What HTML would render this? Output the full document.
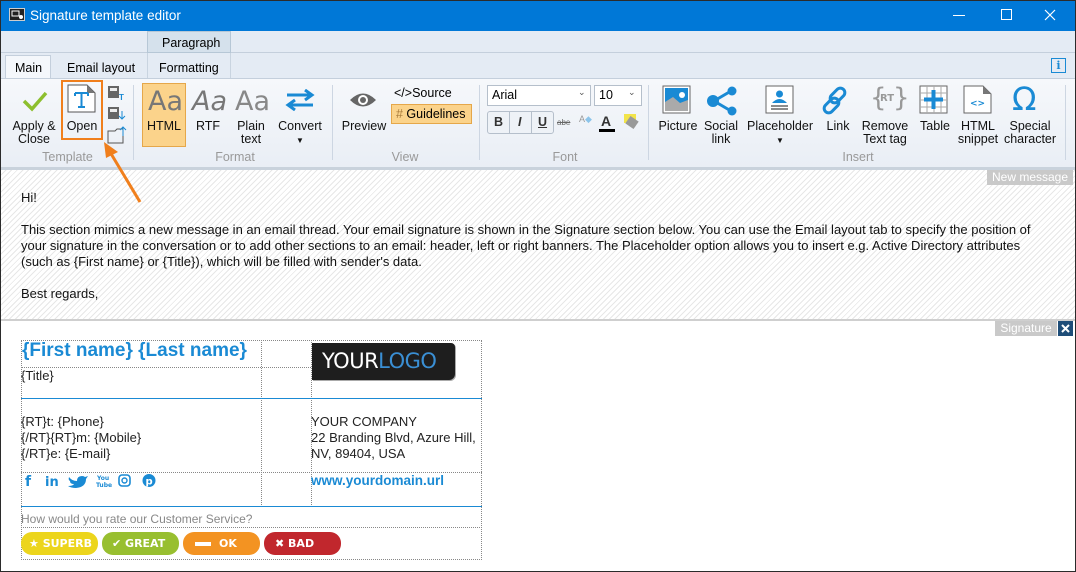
<!DOCTYPE html>
<html><head><style>
*{box-sizing:border-box;margin:0;padding:0}
body{width:1076px;height:572px;overflow:hidden;font-family:"Liberation Sans",Arial,sans-serif;background:#fff;position:relative}
.a{position:absolute}
.win{position:absolute;left:0;top:0;width:1076px;height:572px;border:1px solid #2b2b2b}
.tb{left:0;top:0;width:1076px;height:31px;background:#0078d7;color:#fff;font-size:13px}
.ui{font-family:"Liberation Sans",Arial,sans-serif;font-size:12.5px;color:#000}
.lbl{font-family:"Liberation Sans",Arial,sans-serif;font-size:12.5px;text-align:center;line-height:13px;color:#111}
.grp{font-size:12.5px;color:#999;text-align:center}
.sep{width:1px;background:#cdd6e2;top:85px;height:75px}
.sig{font-family:"Liberation Sans",Arial,sans-serif;font-size:13px;color:#222}
.dv{border-left:1px dotted #888}
.dh{border-top:1px dotted #888}
.btn{height:23px;border-radius:11px;color:#fff;font-weight:bold;font-size:11px;line-height:23px;font-family:"DejaVu Sans",sans-serif}
</style></head><body>
<div class="a tb"></div>
<svg class="a" style="left:9px;top:8px" width="16" height="14"><rect x="0.5" y="0.5" width="15" height="12" fill="#222" stroke="#ccc"/><rect x="3" y="3" width="7" height="5" fill="none" stroke="#fff"/><circle cx="12" cy="9" r="2" fill="#fff"/></svg>
<div class="a ui" style="left:30px;top:8px;color:#fff;font-size:13.5px">Signature template editor</div>
<div class="a" style="left:953px;top:15px;width:12px;height:1px;background:#fff"></div>
<div class="a" style="left:1001px;top:9px;width:11px;height:11px;border:1px solid #fff"></div>
<svg class="a" style="left:1044px;top:9px" width="12" height="12"><path d="M1 1 L11 11 M11 1 L1 11" stroke="#fff" stroke-width="1.2"/></svg>
<!-- tab area -->
<div class="a" style="left:1px;top:31px;width:1074px;height:47px;background:#e4ebf4"></div>
<div class="a" style="left:1px;top:52px;width:1074px;height:1px;background:#c4cfdc"></div>
<div class="a" style="left:147px;top:31px;width:84px;height:22px;background:#d5e1ec;border:1px solid #b6c7d6"></div>
<div class="a ui" style="left:162px;top:36px">Paragraph</div>
<div class="a" style="left:147px;top:53px;width:84px;height:25px;border-left:1px solid #c9d4e0;border-right:1px solid #c9d4e0"></div>
<div class="a" style="left:5px;top:55px;width:46px;height:24px;background:#f4f7fb;border:1px solid #c4cfdc;border-bottom:none"></div>
<div class="a ui" style="left:15px;top:61px">Main</div>
<div class="a ui" style="left:67px;top:61px">Email layout</div>
<div class="a ui" style="left:159px;top:61px">Formatting</div>
<div class="a" style="left:1051px;top:58px;width:15px;height:15px;border:1px solid #1a8ad4;color:#1a8ad4;font:bold 11px 'DejaVu Serif',serif;text-align:center;line-height:13px">i</div>
<!-- ribbon -->
<div class="a" style="left:1px;top:78px;width:1074px;height:90px;background:linear-gradient(#f6f8fb,#e9eef5);border-top:1px solid #c4cfdc"></div>
<div class="a" style="left:1px;top:167px;width:1074px;height:3px;background:#c9d2dc"></div>
<!-- Template group -->
<svg class="a" style="left:22px;top:90px" width="26" height="22"><path d="M2 11 L10 19 L24 3" stroke="#8dbf2e" stroke-width="3.5" fill="none"/></svg>
<div class="a lbl" style="left:8px;top:120px;width:52px">Apply &amp;<br>Close</div>
<div class="a" style="left:61px;top:80px;width:42px;height:60px;border:2px solid #f07f1c"></div>
<svg class="a" style="left:67px;top:84px" width="30" height="30"><path d="M1 1 H20 L28 9 V28 H1 Z" fill="#fff" stroke="#555"/><path d="M20 1 V9 H28" fill="#777"/><path d="M8 9 H21 M14.5 9 V23 M11 23 H18 M8 9 V12 M21 9 V12" stroke="#1a8ad4" stroke-width="2" fill="none"/></svg>
<div class="a lbl" style="left:64px;top:120px;width:36px">Open</div>
<svg class="a" style="left:107px;top:85px" width="20" height="60"><rect x="1" y="1" width="11" height="12" fill="#666"/><rect x="3" y="3" width="7" height="3" fill="#eee"/><text x="12" y="15" font-size="8" fill="#1a8ad4" font-family="Liberation Sans" font-weight="bold">T</text><rect x="1" y="22" width="11" height="12" fill="#666"/><rect x="3" y="24" width="7" height="3" fill="#eee"/><path d="M15 26 V34 M12 31 L15 34 L18 31" stroke="#1a8ad4" fill="none"/><path d="M1 46 H8 L10 44 H16 V58 H1 Z" fill="none" stroke="#555"/><path d="M16 51 V42 M13 45 L16 42 L19 45" stroke="#1a8ad4" fill="none"/></svg>
<div class="a grp" style="left:30px;top:150px;width:75px">Template</div>
<div class="a sep" style="left:133px"></div>
<!-- Format -->
<div class="a" style="left:142px;top:83px;width:44px;height:64px;background:#fbd38b;border:1px solid #e5a74a"></div>
<div class="a" style="left:148px;top:86px;font-size:27px;color:#777;font-family:'DejaVu Sans',sans-serif">Aa</div>
<div class="a lbl" style="left:142px;top:120px;width:44px">HTML</div>
<div class="a" style="left:192px;top:86px;font-size:27px;color:#777;font-style:italic;font-family:'DejaVu Sans',sans-serif">Aa</div>
<div class="a lbl" style="left:188px;top:120px;width:40px">RTF</div>
<div class="a" style="left:235px;top:86px;font-size:27px;color:#888;font-family:'DejaVu Sans',sans-serif">Aa</div>
<div class="a lbl" style="left:231px;top:120px;width:40px">Plain<br>text</div>
<svg class="a" style="left:285px;top:89px" width="30" height="22"><path d="M2 6 H26 M20 1 L27 6 L20 11" stroke="#1a8ad4" stroke-width="3" fill="none"/><path d="M28 16 H4 M10 11 L3 16 L10 21" stroke="#1a8ad4" stroke-width="3" fill="none"/></svg>
<div class="a lbl" style="left:274px;top:120px;width:52px">Convert<br><span style="font-size:8px">▼</span></div>
<div class="a grp" style="left:200px;top:150px;width:70px">Format</div>
<div class="a sep" style="left:332px"></div>
<!-- View -->
<svg class="a" style="left:349px;top:91px" width="28" height="18"><path d="M1 9 Q14 -4 27 9 Q14 22 1 9 Z" fill="#666"/><circle cx="14" cy="9" r="5" fill="#fff"/><circle cx="14" cy="9" r="3" fill="#666"/></svg>
<div class="a lbl" style="left:340px;top:120px;width:48px">Preview</div>
<div class="a ui" style="left:394px;top:86px">&lt;/&gt;Source</div>
<div class="a" style="left:391px;top:104px;width:81px;height:20px;background:#fbd38b;border:1px solid #e5a74a"></div>
<div class="a ui" style="left:396px;top:107px"><span style="color:#a87a3a">#</span> Guidelines</div>
<div class="a grp" style="left:380px;top:150px;width:50px">View</div>
<div class="a sep" style="left:479px"></div>
<!-- Font -->
<div class="a" style="left:487px;top:85px;width:104px;height:21px;background:#fff;border:1px solid #b5bfcb"></div>
<div class="a ui" style="left:492px;top:88px">Arial</div>
<div class="a ui" style="left:578px;top:87px;font-size:9px;color:#555">⌄</div>
<div class="a" style="left:594px;top:85px;width:48px;height:21px;background:#fff;border:1px solid #b5bfcb"></div>
<div class="a ui" style="left:599px;top:88px">10</div>
<div class="a ui" style="left:628px;top:87px;font-size:9px;color:#555">⌄</div>
<div class="a" style="left:487px;top:111px;width:67px;height:23px;border:1px solid #b5bfcb;border-radius:3px;background:#eef2f7"></div>
<div class="a" style="left:509px;top:111px;width:1px;height:23px;background:#b5bfcb"></div>
<div class="a" style="left:531px;top:111px;width:1px;height:23px;background:#b5bfcb"></div>
<div class="a ui" style="left:494px;top:115px;font-weight:bold;color:#333">B</div>
<div class="a ui" style="left:518px;top:115px;font-weight:bold;font-style:italic;color:#333">I</div>
<div class="a ui" style="left:538px;top:115px;font-weight:bold;text-decoration:underline;color:#333">U</div>
<div class="a ui" style="left:557px;top:118px;font-size:8px;color:#666;text-decoration:line-through">abe</div>
<div class="a ui" style="left:579px;top:114px;font-size:9px;color:#999">A<span style="color:#8cc4ea">◆</span></div>
<div class="a ui" style="left:601px;top:113px;font-weight:bold;font-size:14px;color:#333">A</div>
<div class="a" style="left:599px;top:129px;width:16px;height:3px;background:#000"></div>
<div class="a" style="left:624px;top:114px;width:12px;height:9px;background:#f2e44a"></div>
<div class="a" style="left:627px;top:118px;width:10px;height:9px;background:#999;transform:rotate(35deg)"></div>
<div class="a grp" style="left:540px;top:150px;width:50px">Font</div>
<div class="a sep" style="left:648px"></div>
<!-- Insert -->
<svg class="a" style="left:662px;top:85px" width="30" height="30"><rect x="1" y="1" width="27" height="27" fill="#fff" stroke="#666"/><rect x="3" y="3" width="23" height="23" fill="#1a8ad4"/><path d="M3 26 V17 L11 12 L18 18 L26 15 V26 Z" fill="#aaa"/><circle cx="20" cy="10" r="3" fill="#fff"/></svg>
<div class="a lbl" style="left:656px;top:120px;width:44px">Picture</div>
<svg class="a" style="left:706px;top:86px" width="32" height="30"><path d="M8 15 L25 5 M8 15 L25 25" stroke="#1a8ad4" stroke-width="3"/><circle cx="7" cy="15" r="6" fill="#1a8ad4"/><circle cx="26" cy="5" r="4.5" fill="#1a8ad4"/><circle cx="26" cy="25" r="4.5" fill="#1a8ad4"/></svg>
<div class="a lbl" style="left:700px;top:120px;width:42px">Social<br>link</div>
<svg class="a" style="left:765px;top:85px" width="30" height="30"><rect x="1" y="1" width="27" height="27" fill="#fff" stroke="#666"/><circle cx="14.5" cy="9" r="3.5" fill="#1a8ad4"/><path d="M7 18 Q14.5 10 22 18 Z" fill="#1a8ad4"/><path d="M6 21 H23 M6 24 H23" stroke="#666" stroke-width="1.5"/></svg>
<div class="a lbl" style="left:744px;top:120px;width:72px">Placeholder<br><span style="font-size:8px">▼</span></div>
<svg class="a" style="left:821px;top:86px" width="32" height="30"><g fill="none" stroke="#1a8ad4" stroke-width="3"><rect x="12" y="1" width="9" height="17" rx="4.5" transform="rotate(45 16.5 9.5)"/><rect x="6" y="11" width="9" height="17" rx="4.5" transform="rotate(45 10.5 19.5)"/></g></svg>
<div class="a lbl" style="left:820px;top:120px;width:36px">Link</div>
<div class="a" style="left:870px;top:83px;font-family:'DejaVu Sans',sans-serif;font-size:26px;color:#999">{</div>
<div class="a" style="left:880px;top:93px;font-family:'DejaVu Sans',sans-serif;font-size:10px;color:#999;font-weight:bold">RT</div>
<div class="a" style="left:893px;top:83px;font-family:'DejaVu Sans',sans-serif;font-size:26px;color:#999">}</div>
<div class="a lbl" style="left:860px;top:120px;width:50px">Remove<br>Text tag</div>
<svg class="a" style="left:919px;top:85px" width="30" height="30"><rect x="1" y="1" width="27" height="27" fill="#fff" stroke="#666"/><path d="M1 8 H28 M1 15 H28 M1 22 H28 M8 1 V28 M15 1 V28 M22 1 V28" stroke="#aaa"/><path d="M14.5 5 V24 M5 14.5 H24" stroke="#1a8ad4" stroke-width="4"/></svg>
<div class="a lbl" style="left:916px;top:120px;width:38px">Table</div>
<svg class="a" style="left:963px;top:85px" width="30" height="30"><path d="M1 1 H20 L28 9 V28 H1 Z" fill="#fff" stroke="#666"/><path d="M20 1 V9 H28 Z" fill="#777"/><text x="7" y="21" font-size="9" fill="#1a8ad4" font-family="DejaVu Sans" font-weight="bold">&lt;&gt;</text></svg>
<div class="a lbl" style="left:956px;top:120px;width:44px">HTML<br>snippet</div>
<div class="a" style="left:1012px;top:80px;font-family:'DejaVu Sans',sans-serif;font-size:32px;color:#1a8ad4">Ω</div>
<div class="a lbl" style="left:1002px;top:120px;width:56px">Special<br>character</div>
<div class="a grp" style="left:830px;top:150px;width:56px">Insert</div>
<div class="a sep" style="left:1065px"></div>
<!-- new message area -->
<div class="a" style="left:1px;top:170px;width:1074px;height:150px;background:repeating-linear-gradient(135deg,#fff 0 3px,#e7e7e7 3px 4px)"></div>
<div class="a" style="left:987px;top:170px;width:86px;height:15px;background:#c9c9c9;color:#fff;font-size:12px;text-align:center;line-height:15px">New message</div>
<div class="a sig" style="left:21px;top:190px;width:1030px;line-height:16px;color:#111">Hi!<br><br>This section mimics a new message in an email thread. Your email signature is shown in the Signature section below. You can use the Email layout tab to specify the position of your signature in the conversation or to add other sections to an email: header, left or right banners. The Placeholder option allows you to insert e.g. Active Directory attributes (such as {First name} or {Title}), which will be filled with sender's data.<br><br>Best regards,</div>
<div class="a" style="left:1px;top:319px;width:1074px;height:2px;background:#cfcfcf"></div>
<!-- arrow -->
<svg class="a" style="left:100px;top:140px" width="50" height="70"><path d="M40 62 L10 12" stroke="#f07f1c" stroke-width="3"/><path d="M4 2 L18 12 L6 18 Z" fill="#f07f1c"/></svg>
<!-- signature -->
<div class="a" style="left:995px;top:321px;width:62px;height:15px;background:#c9c9c9;color:#fff;font-size:12px;text-align:center;line-height:15px">Signature</div>
<div class="a" style="left:1058px;top:321px;width:15px;height:15px;background:#1e4d78"></div>
<svg class="a" style="left:1061px;top:324px" width="9" height="9"><path d="M1 1 L8 8 M8 1 L1 8" stroke="#fff" stroke-width="2"/></svg>
<div class="a" style="left:21px;top:340px;width:461px;height:220px;border:1px dotted #888"></div>
<div class="a dv" style="left:261px;top:340px;height:167px"></div>
<div class="a dv" style="left:311px;top:340px;height:167px"></div>
<div class="a dh" style="left:21px;top:367px;width:290px"></div>
<div class="a" style="left:21px;top:398px;width:461px;height:1px;background:#1a8ad4"></div>
<div class="a dh" style="left:21px;top:472px;width:461px"></div>
<div class="a" style="left:21px;top:506px;width:461px;height:1px;background:#1a8ad4"></div>
<div class="a dh" style="left:21px;top:527px;width:461px"></div>
<div class="a" style="left:22px;top:340px;font:bold 19px 'Liberation Sans',Arial,sans-serif;color:#1a8ad4">{First name} {Last name}</div>
<div class="a sig" style="left:21px;top:368px">{Title}</div>
<div class="a" style="left:312px;top:343px;width:143px;height:37px;background:#1e1e1e;border-radius:0 4px 6px 0;box-shadow:1px 1px 0 #aaa;color:#fff;font:21px 'DejaVu Sans',sans-serif;line-height:37px;padding-left:10px;letter-spacing:-0.5px">YOUR<span style="color:#3a8fd4">LOGO</span></div>
<div class="a sig" style="left:21px;top:414px;line-height:16px">{RT}t: {Phone}<br>{/RT}{RT}m: {Mobile}<br>{/RT}e: {E-mail}</div>
<div class="a sig" style="left:311px;top:414px;line-height:16px">YOUR COMPANY<br>22 Branding Blvd, Azure Hill,<br>NV, 89404, USA</div>
<svg class="a" style="left:22px;top:473px" width="140" height="16">
<text x="3" y="13" font-family="DejaVu Sans" font-weight="bold" font-size="14" fill="#1a8ad4">f</text>
<text x="23" y="13" font-family="DejaVu Sans" font-weight="bold" font-size="13" fill="#1a8ad4">in</text>
<path d="M47 4 Q50 8 55 8 Q55 3 60 3 Q62 3 63 4 L66 3 L64 6 Q64 14 54 15 Q49 15 46 13 Q51 13 52 11 Q48 11 48 8 Q46 7 47 4 Z" fill="#1a8ad4"/>
<text x="75" y="7" font-family="DejaVu Sans" font-weight="bold" font-size="6" fill="#1a8ad4">You</text>
<text x="74" y="14" font-family="DejaVu Sans" font-weight="bold" font-size="6" fill="#1a8ad4">Tube</text>
<rect x="97" y="2" width="11" height="11" rx="3" fill="none" stroke="#1a8ad4" stroke-width="1.6"/><circle cx="102.5" cy="7.5" r="2.5" fill="none" stroke="#1a8ad4" stroke-width="1.4"/>
<circle cx="127" cy="7.5" r="6.5" fill="#1a8ad4"/><text x="123.5" y="11.5" font-family="DejaVu Sans" font-weight="bold" font-size="10" fill="#fff">p</text>
</svg>
<div class="a" style="left:311px;top:473px;font:bold 13.5px 'Liberation Sans',Arial,sans-serif;color:#1a8ad4">www.yourdomain.url</div>
<div class="a sig" style="left:21px;top:512px;color:#888;font-size:12px">How would you rate our Customer Service?</div>
<div class="a btn" style="left:21px;top:532px;width:77px;background:#ecd51c;padding-left:8px">★ SUPERB</div>
<div class="a btn" style="left:102px;top:532px;width:77px;background:#98bf30;padding-left:10px">✔ GREAT</div>
<div class="a btn" style="left:183px;top:532px;width:77px;background:#f39322;padding-left:12px"><span style="display:inline-block;width:16px;height:4px;background:#fff;vertical-align:middle;margin-right:8px"></span>OK</div>
<div class="a btn" style="left:264px;top:532px;width:77px;background:#c1272d;padding-left:11px">✖ BAD</div>
<div class="win"></div>
</body></html>
